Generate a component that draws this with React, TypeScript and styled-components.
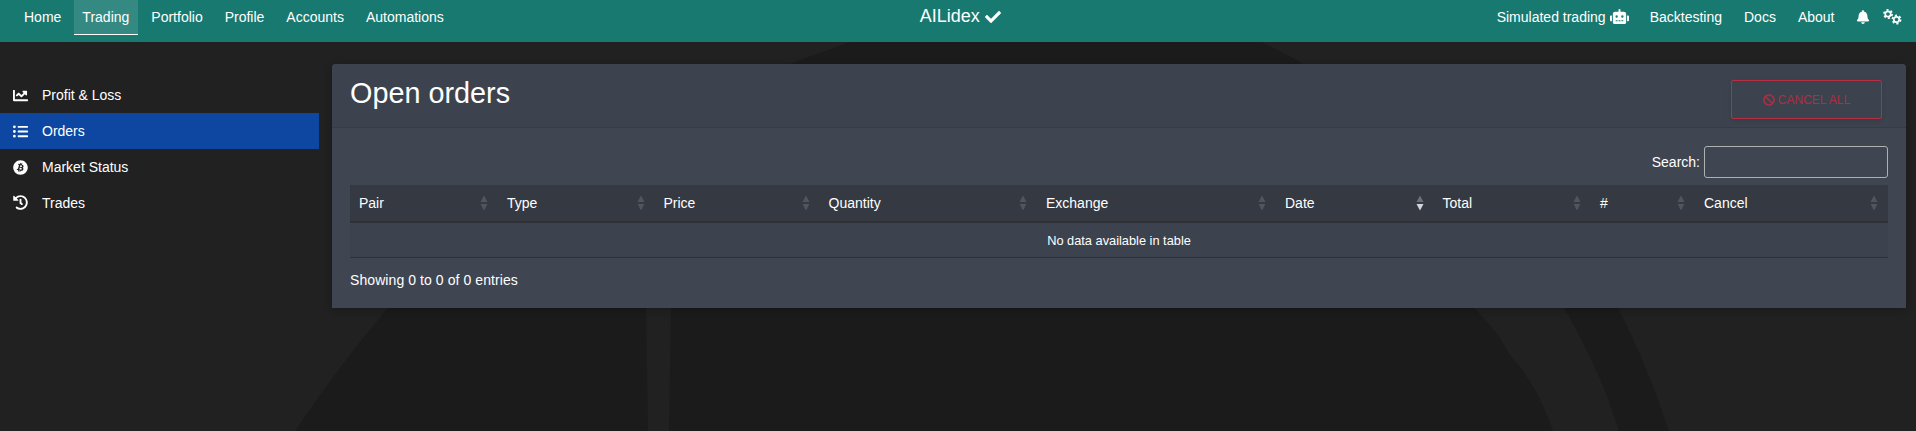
import React from "react";
import styled, { createGlobalStyle } from "styled-components";
import { FaBan, FaBell, FaBitcoin, FaChartLine, FaCheck, FaHistory, FaListUl, FaRobot } from "react-icons/fa";

const Global = createGlobalStyle`
  html, body { margin: 0; padding: 0; height: 100%; background: #212121; overflow: hidden; }
  body { font-family: "Liberation Sans", Arial, sans-serif; font-size: 14px; color: #fff; }
  #root { height: 100%; }
`;

const Page = styled.div`
  position: relative;
  height: 431px;
  overflow: hidden;
  background: #212121;
`;

const Backdrop = styled.svg`
  position: absolute;
  inset: 0;
  width: 1916px;
  height: 431px;
`;

const Shell = styled.div`
  position: relative;
  display: flex;
  flex-direction: column;
  height: 100%;
`;

const Navbar = styled.nav`
  display: grid;
  grid-template-columns: 1fr auto 1fr;
  align-items: start;
  height: 42px;
  flex: none;
  padding: 0 14px 0 15.5px;
  background: #187971;
`;

const NavGroup = styled.div<{ $right?: boolean }>`
  display: flex;
  gap: 5px;
  justify-content: ${(p) => (p.$right ? "flex-end" : "flex-start")};
`;

const NavItem = styled.a<{ $active?: boolean }>`
  display: flex;
  align-items: center;
  gap: 4px;
  height: 33px;
  padding: 0 8.5px 1px;
  color: #fff;
  white-space: nowrap;
  background: ${(p) => (p.$active ? "rgba(255,255,255,.12)" : "transparent")};
  border-bottom: 1px solid ${(p) => (p.$active ? "#fff" : "transparent")};

  &:first-child {
    padding-right: 7.5px;
  }
`;

const BellItem = styled(NavItem)`
  padding: 0 4.5px 1px 8px;
`;

const GearItem = styled(NavItem)`
  padding: 0 0 1px 3.5px;
`;

const Brand = styled.a`
  display: flex;
  align-items: center;
  gap: 5px;
  height: 33px;
  font-size: 18px;
  color: #fff;
  margin-left: 3px;
`;

const Body = styled.div`
  flex: 1;
  display: flex;
  min-height: 0;
`;

const Sidebar = styled.aside`
  flex: none;
  width: 319px;
  padding-top: 35px;
`;

const SideItem = styled.a<{ $active?: boolean }>`
  display: flex;
  align-items: center;
  gap: 14px;
  height: 36px;
  padding-left: 13px;
  color: #fff;
  background: ${(p) => (p.$active ? "#0d47a1" : "transparent")};

  &:last-child {
    height: 35px;
  }
`;

const SideIcon = styled.span`
  display: flex;
  justify-content: center;
  width: 15px;
  font-size: 15px;
`;

const Main = styled.main`
  flex: 1;
  min-width: 0;
  padding: 22px 10px 0 13px;
`;

const Card = styled.section`
  height: 244px;
  background: #3f4551;
  border-radius: 4px 4px 0 0;
  box-shadow: 0 2px 8px rgba(0, 0, 0, 0.25);
`;

const CardHeader = styled.header`
  display: flex;
  justify-content: space-between;
  height: 64px;
  box-sizing: border-box;
  padding: 16px 24px 0 18px;
  background: #3d434e;
  border-bottom: 1px solid #363b45;
  border-radius: 4px 4px 0 0;
`;

const Title = styled.h1`
  margin: 0;
  font-size: 28.8px;
  font-weight: 400;
  line-height: 26px;
  color: #fff;
`;

const CancelAll = styled.button`
  display: flex;
  align-items: center;
  justify-content: center;
  gap: 3px;
  width: 151px;
  height: 39px;
  padding: 0;
  background: transparent;
  border: 1px solid #b92d42;
  border-radius: 2px;
  color: #ac2f44;
  font-family: inherit;
  font-size: 12px;
  box-shadow: 0 2px 4px rgba(0, 0, 0, 0.12);
`;

const CardBody = styled.div`
  padding: 18px 17px 0 18px;
`;

const SearchRow = styled.label`
  display: flex;
  justify-content: flex-end;
  align-items: center;
  gap: 4px;
  height: 32px;
`;

const SearchInput = styled.input`
  box-sizing: border-box;
  width: 184px;
  height: 32px;
  margin-right: 1px;
  background: transparent;
  border: 1px solid #b0b0b0;
  border-radius: 3px;
`;

const Table = styled.table`
  width: 1538px;
  margin-top: 7px;
  border-collapse: collapse;
  table-layout: fixed;
`;

const Th = styled.th`
  position: relative;
  height: 36px;
  padding: 0 0 0 9px;
  background: #353941;
  border-bottom: 2px solid #2e3036;
  font-weight: 400;
  font-size: 14px;
  text-align: left;
  color: #fff;
`;

const Sort = styled.svg`
  position: absolute;
  right: 10px;
  top: 10px;
  width: 8px;
  height: 16px;
`;

const Empty = styled.td`
  height: 34px;
  padding: 0;
  background: #3d434e;
  border-bottom: 1px solid #2f3238;
  font-size: 12.8px;
  text-align: center;
`;

const Info = styled.div`
  margin-top: 13px;
  line-height: 18px;
  letter-spacing: 0.08px;
`;

const columns: [string, number][] = [
  ["Pair", 148],
  ["Type", 156.5],
  ["Price", 165],
  ["Quantity", 217.5],
  ["Exchange", 239],
  ["Date", 157.5],
  ["Total", 157.5],
  ["#", 104],
  ["Cancel", 193],
];

const SortMark = ({ active }: { active?: boolean }) => (
  <Sort viewBox="0 0 8 16" aria-hidden="true">
    <path d="M4 0.5 L7.5 7 L0.5 7 Z" fill={active ? "#6a7078" : "#50565d"} />
    <path d="M4 15.5 L7.5 9 L0.5 9 Z" fill={active ? "#d3d6da" : "#50565d"} />
  </Sort>
);

const Gear = ({ x, y }: { x: number; y: number }) => (
  <g transform={`translate(${x} ${y})`} fill="none" stroke="#fff">
    <circle r="2.7" strokeWidth="1.7" />
    <circle r="4.1" strokeWidth="1.7" strokeDasharray="2.15 2.15" />
  </g>
);

const GearsIcon = () => (
  <svg width="19" height="16" viewBox="0 0 19 16" aria-hidden="true">
    <Gear x={5} y={5} />
    <Gear x={13.5} y={10.5} />
  </svg>
);

export default function App() {
  return (
    <Page>
      <Global />
      <Backdrop viewBox="0 0 1916 431" aria-hidden="true">
        <path
          fill="#1b1b1b"
          d="M850 42 C690 100 500 170 388 308 C350 352 320 395 295 431 L1553 431 C1540 395 1528 375 1509 354 C1500 335 1490 325 1474 308 C1430 190 1390 100 1261 42 Z"
        />
        <path fill="#212121" d="M646 260 L672 260 L671 308 L669 431 L648 431 L646 308 Z" />
        <path fill="#1b1b1b" d="M1530 250 L1590 250 C1600 270 1610 290 1618 308 C1640 350 1655 390 1669 431 L1619 431 C1605 385 1585 345 1564 308 Z" />
      </Backdrop>
      <Shell>
        <Navbar>
          <NavGroup>
            <NavItem>Home</NavItem>
            <NavItem $active>Trading</NavItem>
            <NavItem>Portfolio</NavItem>
            <NavItem>Profile</NavItem>
            <NavItem>Accounts</NavItem>
            <NavItem>Automations</NavItem>
          </NavGroup>
          <Brand>
            AILidex <FaCheck size={16} />
          </Brand>
          <NavGroup $right>
            <NavItem>
              Simulated trading <FaRobot size={19} />
            </NavItem>
            <NavItem>Backtesting</NavItem>
            <NavItem>Docs</NavItem>
            <NavItem>About</NavItem>
            <BellItem>
              <FaBell size={14} />
            </BellItem>
            <GearItem>
              <GearsIcon />
            </GearItem>
          </NavGroup>
        </Navbar>
        <Body>
          <Sidebar>
            <SideItem>
              <SideIcon><FaChartLine /></SideIcon>
              Profit &amp; Loss
            </SideItem>
            <SideItem $active>
              <SideIcon><FaListUl /></SideIcon>
              Orders
            </SideItem>
            <SideItem>
              <SideIcon><FaBitcoin /></SideIcon>
              Market Status
            </SideItem>
            <SideItem>
              <SideIcon><FaHistory /></SideIcon>
              Trades
            </SideItem>
          </Sidebar>
          <Main>
            <Card>
              <CardHeader>
                <Title>Open orders</Title>
                <CancelAll>
                  <FaBan size={12} /> CANCEL ALL
                </CancelAll>
              </CardHeader>
              <CardBody>
                <SearchRow>
                  Search:
                  <SearchInput type="search" />
                </SearchRow>
                <Table>
                  <colgroup>
                    {columns.map(([name, width]) => (
                      <col key={name} width={width} />
                    ))}
                  </colgroup>
                  <thead>
                    <tr>
                      {columns.map(([name]) => (
                        <Th key={name}>
                          {name}
                          <SortMark active={name === "Date"} />
                        </Th>
                      ))}
                    </tr>
                  </thead>
                  <tbody>
                    <tr>
                      <Empty colSpan={columns.length}>No data available in table</Empty>
                    </tr>
                  </tbody>
                </Table>
                <Info>Showing 0 to 0 of 0 entries</Info>
              </CardBody>
            </Card>
          </Main>
        </Body>
      </Shell>
    </Page>
  );
}
